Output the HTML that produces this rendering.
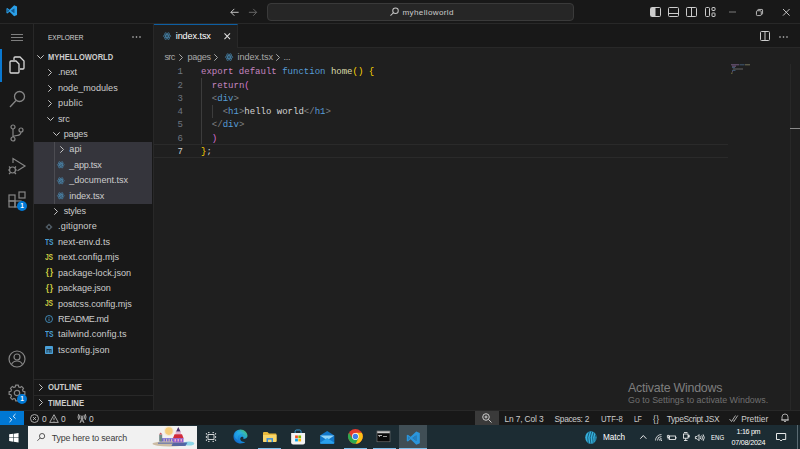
<!DOCTYPE html>
<html><head><meta charset="utf-8"><title>index.tsx - myhelloworld</title>
<style>
*{box-sizing:border-box;margin:0;padding:0}
html,body{width:800px;height:449px;overflow:hidden;background:#1f1f1f;font-family:"Liberation Sans",sans-serif;color:#ccc}
.abs{position:absolute}
#title{left:0;top:0;width:800px;height:24.400px;background:#181818;border-bottom:1px solid #282828}
#act{left:0;top:24.400px;width:34px;height:386.600px;background:#181818;border-right:1px solid #282828}
#side{left:34px;top:24.400px;width:120.200px;height:386.600px;background:#181818;border-right:1px solid #282828}
#tabs{left:154px;top:24px;width:646px;height:24px;background:#181818;border-bottom:1px solid #282828}
#tab{left:154px;top:24.200px;width:83.500px;height:23.800px;background:#1f1f1f;border-top:1.600px solid #0d5fa3;border-right:1px solid #282828}
#status{left:0;top:410px;width:800px;height:15.300px;background:#181818;border-top:1px solid #282828}
#task{left:0;top:425.300px;width:800px;height:23.700px;background:#1c2c33}
.t{position:absolute;white-space:nowrap;line-height:1}
.badge{width:10px;height:10px;border-radius:5px;background:#0078d4;color:#fff;font-size:6.500px;text-align:center;line-height:10px;font-weight:bold}
.k{color:#c586c0}.b{color:#569cd6}.y{color:#dcdcaa}.g{color:#ffd700}.o{color:#da70d6}.gr{color:#808080}.w{color:#d4d4d4}
svg{position:absolute;overflow:visible}
</style></head><body>
<div class="abs" id="title"></div>
<div class="abs" id="act"></div>
<div class="abs" id="side"></div>
<div class="abs" id="tabs"></div>
<div class="abs" id="tab"></div>
<div class="abs" id="status"></div>
<div class="abs" id="task"></div>
<svg style="left:6.100px;top:5.400px" width="11.500" height="11.500" viewBox="0 0 100 100"><path fill="#0e5a9c" d="M72 30v40L44 50zM13 62V38l13 12z"/><path fill="#2a9fe8" d="M71 3 31 41 12 26 4 30v40l8 4 19-15 40 38 25-11V14zM72 30v40L44 50zM13 62V38l13 12z"/></svg>
<svg style="left:230px;top:7.800px" width="9.500" height="8.600" viewBox="0 0 11 10" fill="none" stroke="#ccc" stroke-width="1.100"><path d="M5 1 1 5l4 4M1 5h9"/></svg>
<svg style="left:248px;top:7.800px" width="9.500" height="8.600" viewBox="0 0 11 10" fill="none" stroke="#6a6a6a" stroke-width="1.100"><path d="M6 1l4 4-4 4M10 5H1"/></svg>
<div class="abs" style="left:267px;top:3px;width:307px;height:18px;background:#262626;border:1px solid #3a3a3a;border-radius:4px"></div>
<svg style="left:390px;top:6.800px" width="9.200" height="9.200" viewBox="0 0 10 10" fill="none" stroke="#c4c4c4" stroke-width="1.100"><circle cx="6" cy="4" r="3"/><path d="M4 6 0.5 9.500"/></svg>
<div class="t" style="left:402.50px;top:9px;font-size:8.1px;color:#ccc;letter-spacing:0.334px;">myhelloworld</div>
<svg style="left:650px;top:7px" width="11" height="10" viewBox="0 0 11 10"><rect x=".5" y=".5" width="10" height="9" rx="1" fill="none" stroke="#ccc"/><rect x="1" y="1" width="4.500" height="8" fill="#ccc"/></svg>
<svg style="left:668px;top:7px" width="11" height="10" viewBox="0 0 11 10" fill="none" stroke="#ccc"><rect x=".5" y=".5" width="10" height="9" rx="1"/><path d="M.5 6.500h10"/></svg>
<svg style="left:686px;top:7px" width="11" height="10" viewBox="0 0 11 10" fill="none" stroke="#ccc"><rect x=".5" y=".5" width="10" height="9" rx="1"/><path d="M5.500 .5v9"/></svg>
<svg style="left:705px;top:7px" width="11" height="10" viewBox="0 0 11 10" fill="none" stroke="#ccc"><rect x=".5" y=".5" width="4" height="9" rx="1"/><rect x="7" y=".5" width="3" height="3" rx=".5"/><rect x="7" y="6" width="3" height="3.500" rx=".5"/></svg>
<svg style="left:729px;top:11px" width="7" height="2" viewBox="0 0 7 2"><path d="M0 1h7" stroke="#7a7a7a" stroke-width="1"/></svg>
<svg style="left:755.700px;top:8.500px" width="7" height="7" viewBox="0 0 8 8" fill="none" stroke="#ccc" stroke-width="1"><rect x=".5" y="2" width="5.500" height="5.500" rx="1"/><path d="M2 2V1.200q0-.7.7-.7H6.800q.7 0 .7.7V5.300q0 .7-.7.7H6"/></svg>
<svg style="left:783.200px;top:8.800px" width="6.600" height="6.600" viewBox="0 0 7 7" stroke="#ccc" stroke-width="1"><path d="M0 0l7 7M7 0 0 7"/></svg>
<svg style="left:11px;top:34px" width="12" height="7" viewBox="0 0 12 7" stroke="#8a8a8a" stroke-width=".9"><path d="M0 .5h12M0 3.500h12M0 6.500h12"/></svg>
<div class="abs" style="left:0;top:48.500px;width:2px;height:33.500px;background:#0a78d0"></div>
<svg style="left:9px;top:56px" width="16" height="18" viewBox="0 0 16 18" fill="none" stroke="#d7d7d7" stroke-width="1.300"><path d="M5 4V2q0-1 1-1h5l4 4v7q0 1-1 1h-3"/><path d="M1 6q0-1 1-1h5l3 3v8q0 1-1 1H2q-1 0-1-1z"/></svg>
<svg style="left:9px;top:90px" width="17" height="18" viewBox="0 0 17 18" fill="none" stroke="#868686" stroke-width="1.300"><circle cx="10.500" cy="6.500" r="5"/><path d="M7 10.500 1 17"/></svg>
<svg style="left:10px;top:124px" width="14" height="18" viewBox="0 0 14 18" fill="none" stroke="#868686" stroke-width="1.200"><circle cx="3" cy="3" r="2"/><circle cx="3" cy="15" r="2"/><circle cx="11" cy="6" r="2"/><path d="M3 5v8M11 8q0 3-4 3.500T3 13"/></svg>
<svg style="left:8px;top:157px" width="18" height="18" viewBox="0 0 18 18" fill="none" stroke="#868686" stroke-width="1.200"><path d="M5 6V1.500L17 9 9.500 13.700"/><circle cx="4.500" cy="13" r="3"/><path d="M1 9.500l1.500 1.500M8 9.500 6.500 11M0 13h1.500M7.500 13H9M1 17l1.500-1.500M8 17l-1.500-1.500"/></svg>
<svg style="left:8px;top:191px" width="18" height="18" viewBox="0 0 18 18" fill="none" stroke="#868686" stroke-width="1.200"><rect x="1" y="4" width="6" height="6"/><rect x="1" y="10" width="6" height="6"/><rect x="7" y="10" width="6" height="6"/><rect x="11" y="1" width="6" height="6"/></svg>
<div class="abs badge" style="left:17px;top:201px">1</div>
<svg style="left:8px;top:350px" width="18" height="18" viewBox="0 0 18 18" fill="none" stroke="#868686" stroke-width="1.200"><circle cx="9" cy="9" r="8"/><circle cx="9" cy="7" r="3"/><path d="M3.500 14.500Q5 11 9 11t5.500 3.500"/></svg>
<svg style="left:8px;top:383.500px" width="18" height="18" viewBox="0 0 18 18" fill="none" stroke="#868686" stroke-width="1.200" stroke-linejoin="round"><path d="M15.08 7.34 16.88 7.62 16.88 10.38 15.08 10.66 14.47 12.12 15.55 13.60 13.60 15.55 12.12 14.47 10.66 15.08 10.38 16.88 7.62 16.88 7.34 15.08 5.88 14.47 4.40 15.55 2.45 13.60 3.53 12.12 2.92 10.66 1.12 10.38 1.12 7.62 2.92 7.34 3.53 5.88 2.45 4.40 4.40 2.45 5.88 3.53 7.34 2.92 7.62 1.12 10.38 1.12 10.66 2.92 12.12 3.53 13.60 2.45 15.55 4.40 14.47 5.88z"/><circle cx="9" cy="9" r="2.700"/></svg>
<div class="abs badge" style="left:17px;top:394px">1</div>
<div class="t" style="left:47.50px;top:34px;font-size:7.7px;color:#d6d6d6;transform:scaleX(0.849);transform-origin:0 50%;">EXPLORER</div>
<svg style="left:132px;top:36px" width="9" height="2" viewBox="0 0 9 2" fill="#ccc"><circle cx="1" cy="1" r=".8"/><circle cx="4.500" cy="1" r=".8"/><circle cx="8" cy="1" r=".8"/></svg>
<svg style="left:37.10px;top:54.80px" width="7" height="4" viewBox="0 0 7 4" fill="none" stroke="#c5c5c5" stroke-width="1"><path d="M.3 .3 3.500 3.500 6.700 .3"/></svg>
<div class="t" style="left:47.60px;top:53px;font-size:8.4px;color:#ccc;font-weight:bold;transform:scaleX(0.897);transform-origin:0 50%;">MYHELLOWORLD</div>
<div class="abs" style="left:34px;top:141.500px;width:118px;height:62.500px;background:#35353c"></div>
<div class="abs" style="left:54px;top:141.500px;width:1px;height:62.500px;background:#4c4c52"></div>
<div class="abs" style="left:34px;top:379px;width:119px;height:1px;background:#282828"></div>
<div class="abs" style="left:34px;top:395px;width:119px;height:1px;background:#282828"></div>
<svg style="left:39.00px;top:383.80px" width="4" height="7" viewBox="0 0 4 7" fill="none" stroke="#c5c5c5" stroke-width="1"><path d="M.3 .3 3.500 3.500 .3 6.700"/></svg>
<svg style="left:39.00px;top:399.20px" width="4" height="7" viewBox="0 0 4 7" fill="none" stroke="#c5c5c5" stroke-width="1"><path d="M.3 .3 3.500 3.500 .3 6.700"/></svg>
<div class="t" style="left:47.60px;top:383px;font-size:8.4px;color:#ccc;font-weight:bold;transform:scaleX(0.925);transform-origin:0 50%;">OUTLINE</div>
<div class="t" style="left:47.60px;top:399px;font-size:8.4px;color:#ccc;font-weight:bold;transform:scaleX(0.922);transform-origin:0 50%;">TIMELINE</div>
<svg style="left:48.40px;top:69.20px" width="4" height="7" viewBox="0 0 4 7" fill="none" stroke="#c5c5c5" stroke-width="1"><path d="M.3 .3 3.500 3.500 .3 6.700"/></svg>
<div class="t" style="left:58.00px;top:68px;font-size:9.1px;color:#ccc;letter-spacing:-0.181px;">.next</div>
<svg style="left:48.40px;top:84.62px" width="4" height="7" viewBox="0 0 4 7" fill="none" stroke="#c5c5c5" stroke-width="1"><path d="M.3 .3 3.500 3.500 .3 6.700"/></svg>
<div class="t" style="left:58.00px;top:84px;font-size:9.1px;color:#ccc;letter-spacing:0.002px;">node_modules</div>
<svg style="left:48.40px;top:100.04px" width="4" height="7" viewBox="0 0 4 7" fill="none" stroke="#c5c5c5" stroke-width="1"><path d="M.3 .3 3.500 3.500 .3 6.700"/></svg>
<div class="t" style="left:58.00px;top:99px;font-size:9.1px;color:#ccc;letter-spacing:0.218px;">public</div>
<svg style="left:46.90px;top:116.96px" width="7" height="4" viewBox="0 0 7 4" fill="none" stroke="#c5c5c5" stroke-width="1"><path d="M.3 .3 3.500 3.500 6.700 .3"/></svg>
<div class="t" style="left:58.00px;top:115px;font-size:9.1px;color:#ccc;letter-spacing:-0.222px;">src</div>
<svg style="left:52.55px;top:132.38px" width="7" height="4" viewBox="0 0 7 4" fill="none" stroke="#c5c5c5" stroke-width="1"><path d="M.3 .3 3.500 3.500 6.700 .3"/></svg>
<div class="t" style="left:63.65px;top:130px;font-size:9.1px;color:#ccc;letter-spacing:-0.165px;">pages</div>
<svg style="left:59.70px;top:146.30px" width="4" height="7" viewBox="0 0 4 7" fill="none" stroke="#c5c5c5" stroke-width="1"><path d="M.3 .3 3.500 3.500 .3 6.700"/></svg>
<div class="t" style="left:69.30px;top:145px;font-size:9.1px;color:#ccc;letter-spacing:0.021px;">api</div>
<svg style="left:56.70px;top:161.42px" width="7.6" height="7.6" viewBox="-4.500 -4.500 9 9" fill="none" stroke="#4b8fba" stroke-width=".65"><ellipse rx="4.200" ry="1.600"/><ellipse rx="4.200" ry="1.600" transform="rotate(60)"/><ellipse rx="4.200" ry="1.600" transform="rotate(120)"/><circle r=".8" fill="#4b8fba" stroke="none"/></svg>
<div class="t" style="left:69.30px;top:161px;font-size:9.1px;color:#ccc;letter-spacing:-0.268px;">_app.tsx</div>
<svg style="left:56.70px;top:176.84px" width="7.6" height="7.6" viewBox="-4.500 -4.500 9 9" fill="none" stroke="#4b8fba" stroke-width=".65"><ellipse rx="4.200" ry="1.600"/><ellipse rx="4.200" ry="1.600" transform="rotate(60)"/><ellipse rx="4.200" ry="1.600" transform="rotate(120)"/><circle r=".8" fill="#4b8fba" stroke="none"/></svg>
<div class="t" style="left:69.30px;top:176px;font-size:9.1px;color:#ccc;letter-spacing:-0.042px;">_document.tsx</div>
<svg style="left:56.70px;top:192.26px" width="7.6" height="7.6" viewBox="-4.500 -4.500 9 9" fill="none" stroke="#4b8fba" stroke-width=".65"><ellipse rx="4.200" ry="1.600"/><ellipse rx="4.200" ry="1.600" transform="rotate(60)"/><ellipse rx="4.200" ry="1.600" transform="rotate(120)"/><circle r=".8" fill="#4b8fba" stroke="none"/></svg>
<div class="t" style="left:69.30px;top:192px;font-size:9.1px;color:#ccc;letter-spacing:-0.107px;">index.tsx</div>
<svg style="left:54.05px;top:207.98px" width="4" height="7" viewBox="0 0 4 7" fill="none" stroke="#c5c5c5" stroke-width="1"><path d="M.3 .3 3.500 3.500 .3 6.700"/></svg>
<div class="t" style="left:63.65px;top:207px;font-size:9.1px;color:#ccc;letter-spacing:-0.180px;">styles</div>
<svg style="left:45.20px;top:222.90px" width="8" height="8" viewBox="0 0 8 8"><path d="M4 .4 7.600 4 4 7.600 .4 4z" fill="#4f5b65"/><circle cx="4" cy="4" r="1.200" fill="#181818"/></svg>
<div class="t" style="left:58.00px;top:222px;font-size:9.1px;color:#ccc;letter-spacing:0.154px;">.gitignore</div>
<div class="t" style="left:44.80px;top:238px;font-size:8.4px;color:#4a9fd6;font-weight:bold;transform:scaleX(.8);transform-origin:0 50%;letter-spacing:-.2px;">TS</div>
<div class="t" style="left:58.00px;top:238px;font-size:9.1px;color:#ccc;letter-spacing:0.053px;">next-env.d.ts</div>
<div class="t" style="left:45.00px;top:253px;font-size:8.4px;color:#cbcb41;font-weight:bold;transform:scaleX(.8);transform-origin:0 50%;letter-spacing:-.2px;">JS</div>
<div class="t" style="left:58.00px;top:253px;font-size:9.1px;color:#ccc;letter-spacing:0.036px;">next.config.mjs</div>
<div class="t" style="left:45.80px;top:268px;font-size:8.6px;color:#cbcb41;font-weight:bold;letter-spacing:0.597px;">{}</div>
<div class="t" style="left:58.00px;top:269px;font-size:9.1px;color:#ccc;letter-spacing:0.018px;">package-lock.json</div>
<div class="t" style="left:45.80px;top:284px;font-size:8.6px;color:#cbcb41;font-weight:bold;letter-spacing:0.597px;">{}</div>
<div class="t" style="left:58.00px;top:284px;font-size:9.1px;color:#ccc;letter-spacing:-0.072px;">package.json</div>
<div class="t" style="left:45.00px;top:299px;font-size:8.4px;color:#cbcb41;font-weight:bold;transform:scaleX(.8);transform-origin:0 50%;letter-spacing:-.2px;">JS</div>
<div class="t" style="left:58.00px;top:300px;font-size:9.1px;color:#ccc;letter-spacing:-0.025px;">postcss.config.mjs</div>
<svg style="left:45.20px;top:315.42px" width="8" height="8" viewBox="0 0 8 8" fill="none" stroke="#4a9fd6" stroke-width=".8"><circle cx="4" cy="4" r="3.500"/><path d="M4 3.500v2.500M4 2v.8"/></svg>
<div class="t" style="left:58.00px;top:315px;font-size:9.1px;color:#ccc;letter-spacing:-0.408px;">README.md</div>
<div class="t" style="left:44.80px;top:330px;font-size:8.4px;color:#4a9fd6;font-weight:bold;transform:scaleX(.8);transform-origin:0 50%;letter-spacing:-.2px;">TS</div>
<div class="t" style="left:58.00px;top:330px;font-size:9.1px;color:#ccc;letter-spacing:0.104px;">tailwind.config.ts</div>
<svg style="left:45.20px;top:346.26px" width="8" height="8" viewBox="0 0 8 8"><rect width="8" height="8" rx=".8" fill="#4a9fd6"/><path d="M1.500 3h5v.9h-5zM1.500 3h1v3.800h-1zM3.700 3h1v3.800h-1zM5.500 3h1v3.800h-1z" fill="#181818" opacity=".75"/></svg>
<div class="t" style="left:58.00px;top:346px;font-size:9.1px;color:#ccc;letter-spacing:0.091px;">tsconfig.json</div>
<svg style="left:162.90px;top:32.20px" width="8.2" height="8.2" viewBox="-4.500 -4.500 9 9" fill="none" stroke="#4b8fba" stroke-width=".65"><ellipse rx="4.200" ry="1.600"/><ellipse rx="4.200" ry="1.600" transform="rotate(60)"/><ellipse rx="4.200" ry="1.600" transform="rotate(120)"/><circle r=".8" fill="#4b8fba" stroke="none"/></svg>
<div class="t" style="left:175.70px;top:32px;font-size:9.1px;color:#fff;letter-spacing:-0.082px;">index.tsx</div>
<svg style="left:223.500px;top:33px" width="6.500" height="6.500" viewBox="0 0 7 7" stroke="#e0e0e0" stroke-width="1.100"><path d="M.5 .5l6 6M6.500 .5l-6 6"/></svg>
<svg style="left:760px;top:31px" width="10" height="10" viewBox="0 0 10 10" fill="none" stroke="#ccc"><rect x=".5" y=".5" width="9" height="9" rx="1"/><path d="M5 .5v9"/></svg>
<svg style="left:779px;top:35.5px" width="9" height="2" viewBox="0 0 9 2" fill="#ccc"><circle cx="1" cy="1" r=".8"/><circle cx="4.500" cy="1" r=".8"/><circle cx="8" cy="1" r=".8"/></svg>
<div class="t" style="left:164.40px;top:53px;font-size:9.1px;color:#a9a9a9;letter-spacing:-0.572px;">src</div>
<svg style="left:179.30px;top:54.10px" width="4" height="7" viewBox="0 0 4 7" fill="none" stroke="#a9a9a9" stroke-width="1"><path d="M.3 .3 3.500 3.500 .3 6.700"/></svg>
<div class="t" style="left:187.50px;top:53px;font-size:9.1px;color:#a9a9a9;letter-spacing:-0.277px;">pages</div>
<svg style="left:214.40px;top:54.10px" width="4" height="7" viewBox="0 0 4 7" fill="none" stroke="#a9a9a9" stroke-width="1"><path d="M.3 .3 3.500 3.500 .3 6.700"/></svg>
<svg style="left:225.20px;top:53.20px" width="8.2" height="8.2" viewBox="-4.500 -4.500 9 9" fill="none" stroke="#4b8fba" stroke-width=".65"><ellipse rx="4.200" ry="1.600"/><ellipse rx="4.200" ry="1.600" transform="rotate(60)"/><ellipse rx="4.200" ry="1.600" transform="rotate(120)"/><circle r=".8" fill="#4b8fba" stroke="none"/></svg>
<div class="t" style="left:237.50px;top:53px;font-size:9.1px;color:#a9a9a9;letter-spacing:-0.044px;">index.tsx</div>
<svg style="left:276.00px;top:54.10px" width="4" height="7" viewBox="0 0 4 7" fill="none" stroke="#a9a9a9" stroke-width="1"><path d="M.3 .3 3.500 3.500 .3 6.700"/></svg>
<div class="t" style="left:283.60px;top:53px;font-size:9.1px;color:#a9a9a9;letter-spacing:-0.340px;">...</div>
<div class="abs" style="left:154px;top:144px;width:574px;height:1px;background:#2a2a2a"></div>
<div class="abs" style="left:154px;top:157px;width:574px;height:1px;background:#2a2a2a"></div>
<div class="abs" style="left:201px;top:78px;width:1px;height:66px;background:#3c3c3c"></div>
<div class="abs" style="left:212px;top:104.500px;width:1px;height:13.500px;background:#3c3c3c"></div>
<div class="t" style="left:177.58px;top:67px;font-size:9.03px;color:#6e7681;font-family:'Liberation Mono',monospace;">1</div>
<div class="t" style="left:201.00px;top:67px;font-size:9.03px;color:#d4d4d4;font-family:'Liberation Mono',monospace;white-space:pre;"><span class="k">export default</span> <span class="b">function</span> <span class="y">home</span><span class="g">()</span> <span class="g">{</span></div>
<div class="t" style="left:177.58px;top:81px;font-size:9.03px;color:#6e7681;font-family:'Liberation Mono',monospace;">2</div>
<div class="t" style="left:201.00px;top:81px;font-size:9.03px;color:#d4d4d4;font-family:'Liberation Mono',monospace;white-space:pre;">  <span class="k">return</span><span class="o">(</span></div>
<div class="t" style="left:177.58px;top:94px;font-size:9.03px;color:#6e7681;font-family:'Liberation Mono',monospace;">3</div>
<div class="t" style="left:201.00px;top:94px;font-size:9.03px;color:#d4d4d4;font-family:'Liberation Mono',monospace;white-space:pre;">  <span class="gr">&lt;</span><span class="b">div</span><span class="gr">&gt;</span></div>
<div class="t" style="left:177.58px;top:107px;font-size:9.03px;color:#6e7681;font-family:'Liberation Mono',monospace;">4</div>
<div class="t" style="left:201.00px;top:107px;font-size:9.03px;color:#d4d4d4;font-family:'Liberation Mono',monospace;white-space:pre;">    <span class="gr">&lt;</span><span class="b">h1</span><span class="gr">&gt;</span><span class="w">hello world</span><span class="gr">&lt;/</span><span class="b">h1</span><span class="gr">&gt;</span></div>
<div class="t" style="left:177.58px;top:120px;font-size:9.03px;color:#6e7681;font-family:'Liberation Mono',monospace;">5</div>
<div class="t" style="left:201.00px;top:120px;font-size:9.03px;color:#d4d4d4;font-family:'Liberation Mono',monospace;white-space:pre;">  <span class="gr">&lt;/</span><span class="b">div</span><span class="gr">&gt;</span></div>
<div class="t" style="left:177.58px;top:134px;font-size:9.03px;color:#6e7681;font-family:'Liberation Mono',monospace;">6</div>
<div class="t" style="left:201.00px;top:134px;font-size:9.03px;color:#d4d4d4;font-family:'Liberation Mono',monospace;white-space:pre;">  <span class="o">)</span></div>
<div class="t" style="left:177.58px;top:147px;font-size:9.03px;color:#ccc;font-family:'Liberation Mono',monospace;">7</div>
<div class="t" style="left:201.00px;top:147px;font-size:9.03px;color:#d4d4d4;font-family:'Liberation Mono',monospace;white-space:pre;"><span class="g">}</span><span class="w">;</span></div>
<svg style="left:731px;top:64px" width="22" height="10" viewBox="0 0 22 10" fill="none" stroke-width=".8"><path d="M0 .8h8" stroke="#8a6a9a"/><path d="M8.500 .8h5" stroke="#4a6a8a"/><path d="M14 .8h5" stroke="#8a8a6a"/><path d="M1 2.200h4" stroke="#8a6a9a"/><path d="M1 3.600h3" stroke="#4a6a8a"/><path d="M2 5h10" stroke="#777"/><path d="M1 6.400h3.500" stroke="#4a6a8a"/><path d="M1 7.800h1" stroke="#8a6a9a"/><path d="M0 9.200h1.500" stroke="#8a8a4a"/></svg>
<div class="abs" style="left:790px;top:64px;width:10px;height:346px;border-left:1px solid #282828"></div>
<div class="abs" style="left:790px;top:128px;width:10px;height:1px;background:#8a8a8a"></div>
<div class="abs" style="left:0;top:410.700px;width:24px;height:14.600px;background:#0078d4"></div>
<svg style="left:8.500px;top:414px" width="7" height="8" viewBox="0 0 7 8" fill="none" stroke="#fff" stroke-width=".9"><path d="M.5 3.500 2.800 5.800.5 8M6.500 0 4.200 2.300l2.300 2.300"/></svg>
<div class="abs" style="left:475px;top:410.700px;width:24px;height:14.600px;background:#3a3a3a"></div>
<svg style="left:482px;top:413px" width="10" height="10" viewBox="0 0 10 10" fill="none" stroke="#ddd" stroke-width=".9"><circle cx="4" cy="4" r="3.300"/><path d="M6.500 6.500 9.500 9.500M2.500 4h3M4 2.500v3"/></svg>
<svg style="left:30px;top:413.500px" width="9" height="9" viewBox="0 0 9 9" fill="none" stroke="#ccc" stroke-width=".8"><circle cx="4.500" cy="4.500" r="4"/><path d="M3 3l3 3M6 3 3 6"/></svg>
<svg style="left:49px;top:413.500px" width="10" height="9" viewBox="0 0 10 9" fill="none" stroke="#ccc" stroke-width=".8"><path d="M5 .7 9.300 8.400H.7z"/><path d="M5 3.500v2.500M5 6.800v.8"/></svg>
<svg style="left:77.500px;top:413.500px" width="8" height="9" viewBox="0 0 8 9" fill="none" stroke="#ccc" stroke-width=".8"><circle cx="4" cy="3" r="1"/><path d="M4 4 2 9M4 4l2 5M2.800 7h2.400M2 1Q1 3 2 5M6 1q1 2 0 4M.8 0Q-.8 3 .8 6M7.200 0q1.600 3 0 6"/></svg>
<div class="t" style="left:42.00px;top:415px;font-size:8.4px;color:#ccc;">0</div>
<div class="t" style="left:61.00px;top:415px;font-size:8.4px;color:#ccc;">0</div>
<div class="t" style="left:89.00px;top:415px;font-size:8.4px;color:#ccc;">0</div>
<div class="t" style="left:504.50px;top:415px;font-size:8.4px;color:#ccc;letter-spacing:-0.141px;">Ln 7, Col 3</div>
<div class="t" style="left:554.50px;top:415px;font-size:8.4px;color:#ccc;letter-spacing:-0.305px;">Spaces: 2</div>
<div class="t" style="left:600.50px;top:415px;font-size:8.4px;color:#ccc;transform:scaleX(0.920);transform-origin:0 50%;">UTF-8</div>
<div class="t" style="left:633.70px;top:415px;font-size:8.4px;color:#ccc;transform:scaleX(.84);transform-origin:0 50%;letter-spacing:-.4px;">LF</div>
<div class="t" style="left:652.90px;top:415px;font-size:8.4px;color:#ccc;letter-spacing:0.475px;">{}</div>
<div class="t" style="left:666.70px;top:415px;font-size:8.4px;color:#ccc;letter-spacing:-0.339px;">TypeScript JSX</div>
<svg style="left:729px;top:414.500px" width="9" height="7" viewBox="0 0 9 7" fill="none" stroke="#ccc" stroke-width=".8"><path d="M.5 4 2.500 6.500 6.500 .5M4 5.500l.8 1L8.800 .5"/></svg>
<div class="t" style="left:741.20px;top:415px;font-size:8.4px;color:#ccc;letter-spacing:0.001px;">Prettier</div>
<svg style="left:780.500px;top:413px" width="8" height="9" viewBox="0 0 8 9" fill="none" stroke="#ccc" stroke-width=".8"><path d="M1 7V4Q1 1 4 1t3 3V7zM0 7h8M3 8.500h2"/></svg>
<div class="t" style="left:628.00px;top:382px;font-size:12.4px;color:#7e7e7e;letter-spacing:-0.222px;">Activate Windows</div>
<div class="t" style="left:628.00px;top:396px;font-size:8.9px;color:#6f6f6f;letter-spacing:0.000px;">Go to Settings to activate Windows.</div>
<svg style="left:9px;top:432.600px" width="9.700" height="9.400" viewBox="0 0 10 10" fill="#fff"><path d="M0 1.400 4.300.8v3.900H0zM4.900.7 10 0v4.700H4.900zM0 5.300h4.300v3.900L0 8.600zM4.900 5.300H10V10L4.900 9.300z"/></svg>
<div class="abs" style="left:28px;top:425.700px;width:168.600px;height:23.300px;background:#f1f1f1"></div>
<svg style="left:36.500px;top:433.400px" width="8.200" height="8.200" viewBox="0 0 10 10" fill="none" stroke="#333" stroke-width="1"><circle cx="6.200" cy="3.800" r="3.200"/><path d="M4 6 .5 9.500"/></svg>
<div class="t" style="left:51.70px;top:434px;font-size:8.9px;color:#3c3c3c;letter-spacing:-0.165px;">Type here to search</div>
<div class="abs" style="left:399px;top:425.300px;width:28px;height:23.700px;background:#404e55"></div>
<svg style="left:150px;top:426px" width="46" height="22" viewBox="150 426 46 22">
<ellipse cx="170" cy="443.800" rx="17.500" ry="2.700" fill="#bfa98a" opacity=".75"/>
<ellipse cx="189" cy="443.600" rx="5.200" ry="2" fill="#8ed6e8"/>
<path d="M173 442.600h14.500l-2 3.400h-14z" fill="#3f56a0" opacity=".85"/>
<path d="M158 442.400h15v1.600h-15z" fill="#5a6fae" opacity=".7"/>
<circle cx="168.900" cy="431.100" r="3.800" fill="#f4c568"/>
<circle cx="168.900" cy="431.100" r="5" fill="#f7d9a0" opacity=".35"/>
<path d="M176 431.800 178.300 427 180.600 431.800z" fill="#4a2f6a"/>
<path d="M175.600 431.600h5.400v2.900h-5.400z" fill="#e3b3d3"/>
<path d="M172.800 438.400 174.600 434.300h7.400l1.700 4.100z" fill="#d22b3b"/>
<path d="M173 438.200h10.500v4.200H173z" fill="#8c5fd2"/>
<path d="M174.500 439h1.500v2.400h-1.500zM177.500 439h1.500v2.400h-1.500zM180.500 439h1.500v2.400h-1.500z" fill="#e9a6c8"/>
<path d="M160 438.200h13v3.200h-13z" fill="#6b5cd9"/>
<path d="M163.500 438.800h1.200v2.600h-1.200zM166 438.800h1.200v2.600H166zM168.500 438.800h1.200v2.600h-1.200zM171 438.800h1.200v2.600H171z" fill="#e8d9a0" opacity=".8"/>
<path d="M159.200 434.600h3v6.900h-3z" fill="#6f8a86"/>
<path d="M159 434.600 160.700 432.400 162.400 434.600z" fill="#c8505c"/>
</svg>
<svg style="left:206.200px;top:431.700px" width="10" height="10" viewBox="0 0 10 10" fill="none" stroke="#fff" stroke-width=".8"><rect x="2" y="2.600" width="6" height="4.800"/><path d="M.4 1v1.600M.4 4v2M.4 7.400V9M9.600 1v1.600M9.600 4v2M9.600 7.400V9M2 .6h1.500M6.500 .6H8M2 9.400h1.500M6.500 9.400H8"/></svg>
<svg style="left:233.200px;top:428.800px" width="15" height="15" viewBox="0 0 30 30"><defs><linearGradient id="eg" x1="0" y1="1" x2="1" y2="0"><stop offset="0" stop-color="#0c59c4"/><stop offset=".55" stop-color="#1b9de2"/><stop offset="1" stop-color="#5ad15a"/></linearGradient></defs><path d="M15 1C7 1 1 7 1 15.500 1 24 8 29 15 29c4 0 8-1.500 10-3.500-3 1-8 .5-10-3.500-1.500-3 0-6 2.500-6.500 2-.4 3.500.8 3.500 2.500 0 1-.5 2-.5 2 4 0 8.500-2 8.500-6C29 7 23 1 15 1z" fill="url(#eg)"/><path d="M3 12C6 5 14 3 20 6c4 2 6 5 6 8-2-4-6-5-10-4-5 1-8 6-6 12C5 20 2 16 3 12z" fill="#35c1f1" opacity=".35"/></svg>
<svg style="left:262.700px;top:431.900px" width="13.500" height="10.200" viewBox="0 0 27 20"><path d="M0 2q0-2 2-2h7l3 3h13q2 0 2 2v13q0 2-2 2H2q-2 0-2-2z" fill="#e9b93b"/><path d="M0 6h27v12q0 2-2 2H2q-2 0-2-2z" fill="#f8d66b"/><path d="M7 12h13v8H7z" fill="#3d8fdc"/><path d="M10 15h7v5h-7z" fill="#f8d66b"/></svg>
<svg style="left:290.800px;top:428.800px" width="14.200" height="15.400" viewBox="0 0 28 31"><path d="M8 8V5q0-3 3-3h6q3 0 3 3v3" fill="none" stroke="#3aa0d8" stroke-width="2"/><path d="M0 8h28v19q0 4-4 4H4q-4 0-4-4z" fill="#f3f3f3"/><rect x="8" y="13" width="5.500" height="5.500" fill="#f25022"/><rect x="14.500" y="13" width="5.500" height="5.500" fill="#7fba00"/><rect x="8" y="19.500" width="5.500" height="5.500" fill="#00a4ef"/><rect x="14.500" y="19.500" width="5.500" height="5.500" fill="#ffb900"/></svg>
<svg style="left:319.700px;top:431px" width="14.400" height="12.800" viewBox="0 0 29 26"><path d="M0 9 14.500 0 29 9v15q0 2-2 2H2q-2 0-2-2z" fill="#1277c9"/><path d="M0 9h29L14.500 19z" fill="#8fd3f7"/><path d="M0 24 14.500 14 29 24q0 2-2 2H2q-2 0-2-2z" fill="#2aa0ec"/></svg>
<svg style="left:347.900px;top:429.200px" width="14.800" height="14.800" viewBox="-15 -15 30 30"><circle r="15" fill="#e33b2e"/><path d="M-13 7.500A15 15 0 0 0 2 14.900L8 3-6.500 3-13 -7.500A15 15 0 0 0 -13 7.500z" fill="#2da94f" transform="rotate(0)"/><path d="M13 -7.500H0L6.500 3.500 .5 15A15 15 0 0 0 13 -7.500z" fill="#fbc116"/><circle r="6.800" fill="#fff"/><circle r="5.400" fill="#3f7fe8"/></svg>
<svg style="left:377px;top:431.300px" width="13" height="10.800" viewBox="0 0 26 21.600"><rect width="26" height="21.600" fill="#0a0a0a" stroke="#8a8a8a" stroke-width="1"/><rect x=".5" y=".5" width="25" height="4" fill="#c8c8c8"/><path d="M3 9h7M3 9l3 2.500" stroke="#ddd" stroke-width="1.600" fill="none"/><path d="M12 11h8" stroke="#ddd" stroke-width="1.400"/></svg>
<svg style="left:405.800px;top:430.700px" width="14.600" height="14.200" viewBox="0 0 100 100"><path fill="#1f7fc6" d="M72 30v40L44 50zM13 62V38l13 12z"/><path fill="#2a95dc" d="M71 3 31 41 12 26 4 30v40l8 4 19-15 40 38 25-11V14zM72 30v40L44 50zM13 62V38l13 12z"/></svg>
<div class="abs" style="left:258px;top:447.500px;width:23.0px;height:1.500px;background:#7dbdea"></div>
<div class="abs" style="left:343.9px;top:447.500px;width:23.1px;height:1.500px;background:#7dbdea"></div>
<div class="abs" style="left:372.6px;top:447.500px;width:23.3px;height:1.500px;background:#7dbdea"></div>
<div class="abs" style="left:399px;top:447.500px;width:28.2px;height:1.500px;background:#7dbdea"></div>
<svg style="left:585.200px;top:430.500px" width="11.800" height="13" viewBox="0 0 24 26"><defs><clipPath id="mb"><ellipse cx="12" cy="13" rx="11.500" ry="12.800"/></clipPath></defs><ellipse cx="12" cy="13" rx="11.500" ry="12.800" fill="#35b0dc"/><g clip-path="url(#mb)" stroke="#12506e" stroke-width="1.800" fill="none"><path d="M9 0Q3 12 7 27M14 0Q8 12 12 27M19 0Q13 12 17 27M24 2Q18 12 22 27"/></g></svg>
<svg style="left:640.400px;top:435.400px" width="6.600" height="4" viewBox="0 0 6.600 4" fill="none" stroke="#fff" stroke-width=".9"><path d="M.3 3.700 3.300 .5l3 3.200"/></svg>
<svg style="left:654.700px;top:434px" width="7.300" height="7" viewBox="0 0 7.300 7" fill="none" stroke="#fff" stroke-width=".8"><path d="M.5 6.500A6 6 0 0 1 6.500 .5" opacity=".9"/><path d="M2.500 6.500A4 4 0 0 1 6.500 2.500"/><path d="M4.500 6.500A2 2 0 0 1 6.500 4.500"/><circle cx="6.300" cy="6.300" r=".7" fill="#fff" stroke="none"/></svg>
<svg style="left:667px;top:434.500px" width="9.700" height="5.700" viewBox="0 0 9.700 5.700" fill="none" stroke="#fff" stroke-width=".8"><rect x="2.600" y="1" width="6" height="3.600"/><path d="M9.200 2.200v1.300M.4 .4h1.600v2H.4zM1.200 2.400v2"/></svg>
<svg style="left:683.200px;top:432px" width="6.500" height="9" viewBox="0 0 6.500 9" fill="none" stroke="#fff" stroke-width=".8"><rect x=".4" y="2" width="4.600" height="4.200"/><path d="M1 .5h3.500M1 8.500h3.500M2.700 6.200v2.300M5.500 3.200h.8v2h-.8z"/></svg>
<svg style="left:695px;top:433.700px" width="10" height="7.300" viewBox="0 0 10 7.300" fill="none" stroke="#fff" stroke-width=".8"><path d="M.4 2.600h1.600L4 .6v6.100L2 4.700H.4z"/><path d="M5.300 2.300q1 1.300 0 2.700M6.700 1.300q1.700 2.300 0 4.700M8.100 .4q2.400 3.200 0 6.500"/></svg>
<svg style="left:776px;top:432.600px" width="10.200" height="9" viewBox="0 0 10.200 9" fill="none" stroke="#fff" stroke-width=".9"><path d="M.5 .5h9.200v6H6.600L5.100 8 3.600 6.500H.5z"/></svg>
<div class="abs" style="left:796.500px;top:425.300px;width:1px;height:23.700px;background:#5a6a72"></div>
<div class="t" style="left:603.00px;top:434px;font-size:8.2px;color:#fff;letter-spacing:-0.041px;">Match</div>
<div class="t" style="left:710.60px;top:434px;font-size:7.4px;color:#fff;transform:scaleX(0.824);transform-origin:0 50%;">ENG</div>
<div class="t" style="left:736.60px;top:428px;font-size:7.2px;color:#fff;letter-spacing:-0.332px;">1:16 pm</div>
<div class="t" style="left:731.40px;top:439px;font-size:7.2px;color:#fff;letter-spacing:-0.205px;">07/08/2024</div>
</body></html>
